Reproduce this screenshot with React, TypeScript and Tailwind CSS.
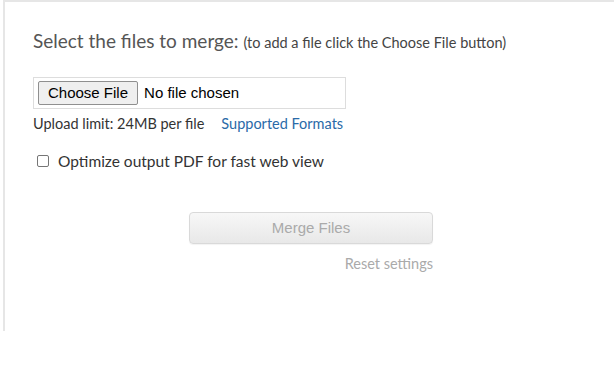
import React from 'react';

const App: React.FC = () => {
  return (
    <div className="w-[614px] h-[366px] bg-white" style={{ fontFamily: 'Lato, "Noto Sans", sans-serif' }}>
      <div className="h-[331px] ml-[3px] border-l-2 border-t-2 border-[#e6e6e6] pl-[28px] pt-[24px]">
        <h2 className="text-[19px] text-[#555] leading-[30px]">
          Select the files to merge:{' '}
          <span className="text-[14.5px] text-[#444]">(to add a file click the Choose File button)</span>
        </h2>

        <div className="mt-[19px] w-[313px] h-[32px] border border-[#ddd] flex items-center px-[4px]">
          <button
            className="h-[24px] px-[9px] border border-[#8f8f8f] rounded-[2px] bg-[#efefef] text-[15px] text-black"
            style={{ fontFamily: '"Liberation Sans", Arial, sans-serif' }}
          >
            Choose File
          </button>
          <span className="ml-[6px] text-[15px] text-black" style={{ fontFamily: '"Liberation Sans", Arial, sans-serif' }}>
            No file chosen
          </span>
        </div>

        <div className="mt-[4px] text-[14.5px] text-[#333] flex gap-[17px]">
          <span>Upload limit: 24MB per file</span>
          <a className="text-[#2a6aa8]">Supported Formats</a>
        </div>

        <label className="mt-[15px] flex items-center gap-[9px] text-[15.5px] text-[#333] pl-[4px]">
          <span className="w-[12px] h-[12px] border border-[#767676] rounded-[2px] bg-white" />
          Optimize output PDF for fast web view
        </label>

        <div className="w-[400px] flex flex-col items-end">
          <button
            className="mt-[39px] w-[244px] h-[32px] rounded-[4px] border border-[#d9d9d9] bg-gradient-to-b from-[#f7f7f7] to-[#e8e8e8] text-[15px] text-[#aaa] shadow-[0_1px_1px_rgba(0,0,0,0.05)]"
            style={{ fontFamily: '"Liberation Sans", Arial, sans-serif' }}
          >
            Merge Files
          </button>
          <span className="mt-[9px] text-[14.5px] text-[#aaa]">Reset settings</span>
        </div>
      </div>
    </div>
  );
};

export default App;
